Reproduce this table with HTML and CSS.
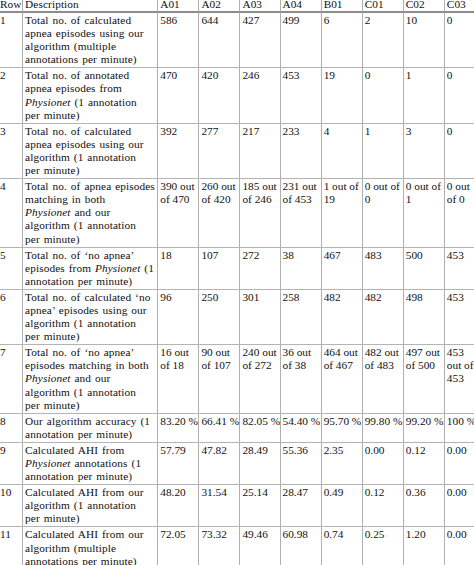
FILE: index.html
```html
<!DOCTYPE html>
<html>
<head>
<meta charset="utf-8">
<link rel="stylesheet" href="styles.css">
</head>
<body>
<table class="results">
  <thead>
    <tr>
      <th class="c-row">Row</th>
      <th class="c-desc">Description</th>
      <th class="c-num">A01</th>
      <th class="c-num">A02</th>
      <th class="c-num c-narrow">A03</th>
      <th class="c-num">A04</th>
      <th class="c-num">B01</th>
      <th class="c-num">C01</th>
      <th class="c-num">C02</th>
      <th class="c-num">C03</th>
    </tr>
  </thead>
  <tbody>
    <tr>
      <td>1</td>
      <td class="desc">Total no. of calculated<br>apnea episodes using our<br>algorithm (multiple<br>annotations per minute)</td>
      <td>586</td><td>644</td><td>427</td><td>499</td><td>6</td><td>2</td><td>10</td><td>0</td>
    </tr>
    <tr>
      <td>2</td>
      <td class="desc">Total no. of annotated<br>apnea episodes from<br><i>Physionet</i> (1 annotation<br>per minute)</td>
      <td>470</td><td>420</td><td>246</td><td>453</td><td>19</td><td>0</td><td>1</td><td>0</td>
    </tr>
    <tr>
      <td>3</td>
      <td class="desc">Total no. of calculated<br>apnea episodes using our<br>algorithm (1 annotation<br>per minute)</td>
      <td>392</td><td>277</td><td>217</td><td>233</td><td>4</td><td>1</td><td>3</td><td>0</td>
    </tr>
    <tr>
      <td>4</td>
      <td class="desc">Total no. of apnea episodes<br>matching in both<br><i>Physionet</i> and our<br>algorithm (1 annotation<br>per minute)</td>
      <td>390 out<br>of 470</td><td>260 out<br>of 420</td><td>185 out<br>of 246</td><td>231 out<br>of 453</td><td>1 out of<br>19</td><td>0 out of<br>0</td><td>0 out of<br>1</td><td>0 out<br>of 0</td>
    </tr>
    <tr>
      <td>5</td>
      <td class="desc">Total no. of ‘no apnea’<br>episodes from <i>Physionet</i> (1<br>annotation per minute)</td>
      <td>18</td><td>107</td><td>272</td><td>38</td><td>467</td><td>483</td><td>500</td><td>453</td>
    </tr>
    <tr>
      <td>6</td>
      <td class="desc">Total no. of calculated ‘no<br>apnea’ episodes using our<br>algorithm (1 annotation<br>per minute)</td>
      <td>96</td><td>250</td><td>301</td><td>258</td><td>482</td><td>482</td><td>498</td><td>453</td>
    </tr>
    <tr>
      <td>7</td>
      <td class="desc">Total no. of ‘no apnea’<br>episodes matching in both<br><i>Physionet</i> and our<br>algorithm (1 annotation<br>per minute)</td>
      <td>16 out<br>of 18</td><td>90 out<br>of 107</td><td>240 out<br>of 272</td><td>36 out<br>of 38</td><td>464 out<br>of 467</td><td>482 out<br>of 483</td><td>497 out<br>of 500</td><td>453<br>out of<br>453</td>
    </tr>
    <tr>
      <td>8</td>
      <td class="desc">Our algorithm accuracy (1<br>annotation per minute)</td>
      <td>83.20 %</td><td>66.41 %</td><td>82.05 %</td><td>54.40 %</td><td>95.70 %</td><td>99.80 %</td><td>99.20 %</td><td>100 %</td>
    </tr>
    <tr>
      <td>9</td>
      <td class="desc">Calculated AHI from<br><i>Physionet</i> annotations (1<br>annotation per minute)</td>
      <td>57.79</td><td>47.82</td><td>28.49</td><td>55.36</td><td>2.35</td><td>0.00</td><td>0.12</td><td>0.00</td>
    </tr>
    <tr>
      <td>10</td>
      <td class="desc">Calculated AHI from our<br>algorithm (1 annotation<br>per minute)</td>
      <td>48.20</td><td>31.54</td><td>25.14</td><td>28.47</td><td>0.49</td><td>0.12</td><td>0.36</td><td>0.00</td>
    </tr>
    <tr>
      <td>11</td>
      <td class="desc">Calculated AHI from our<br>algorithm (multiple<br>annotations per minute)</td>
      <td>72.05</td><td>73.32</td><td>49.46</td><td>60.98</td><td>0.74</td><td>0.25</td><td>1.20</td><td>0.00</td>
    </tr>
  </tbody>
</table>
</body>
</html>
```
FILE: styles.css
```css
html, body {
  margin: 0;
  padding: 0;
  background: #ffffff;
  overflow: hidden;
}

.results {
  font-family: "Liberation Serif", "Times New Roman", serif;
  font-size: 11.3px;
  line-height: 13.1px;
  color: #111111;
  border-collapse: separate;
  border-spacing: 0;
  table-layout: fixed;
  width: 488px;
  margin-top: -3.1px;
  margin-left: -2px;
}

.results th,
.results td {
  box-sizing: border-box;
  padding: 1px 1px 1px 2px;
  text-align: left;
  vertical-align: top;
  font-weight: normal;
  white-space: nowrap;
  overflow: visible;
  border-right: 1px solid #b0b0b0;
  border-bottom: 1px solid #b4b4b4;
}

.results th {
  padding-bottom: 0;
  border-bottom: 2px solid #8c8c8c;
}

.results .c-row { width: 25px; }
.results .c-desc { width: 135px; letter-spacing: 0.1px; word-spacing: 1px; }
.results .c-num { width: 41px; }
.results .c-narrow { width: 40px; }

.results .desc {
  letter-spacing: 0.1px;
  word-spacing: 1px;
}

.results i {
  font-style: italic;
}
```
